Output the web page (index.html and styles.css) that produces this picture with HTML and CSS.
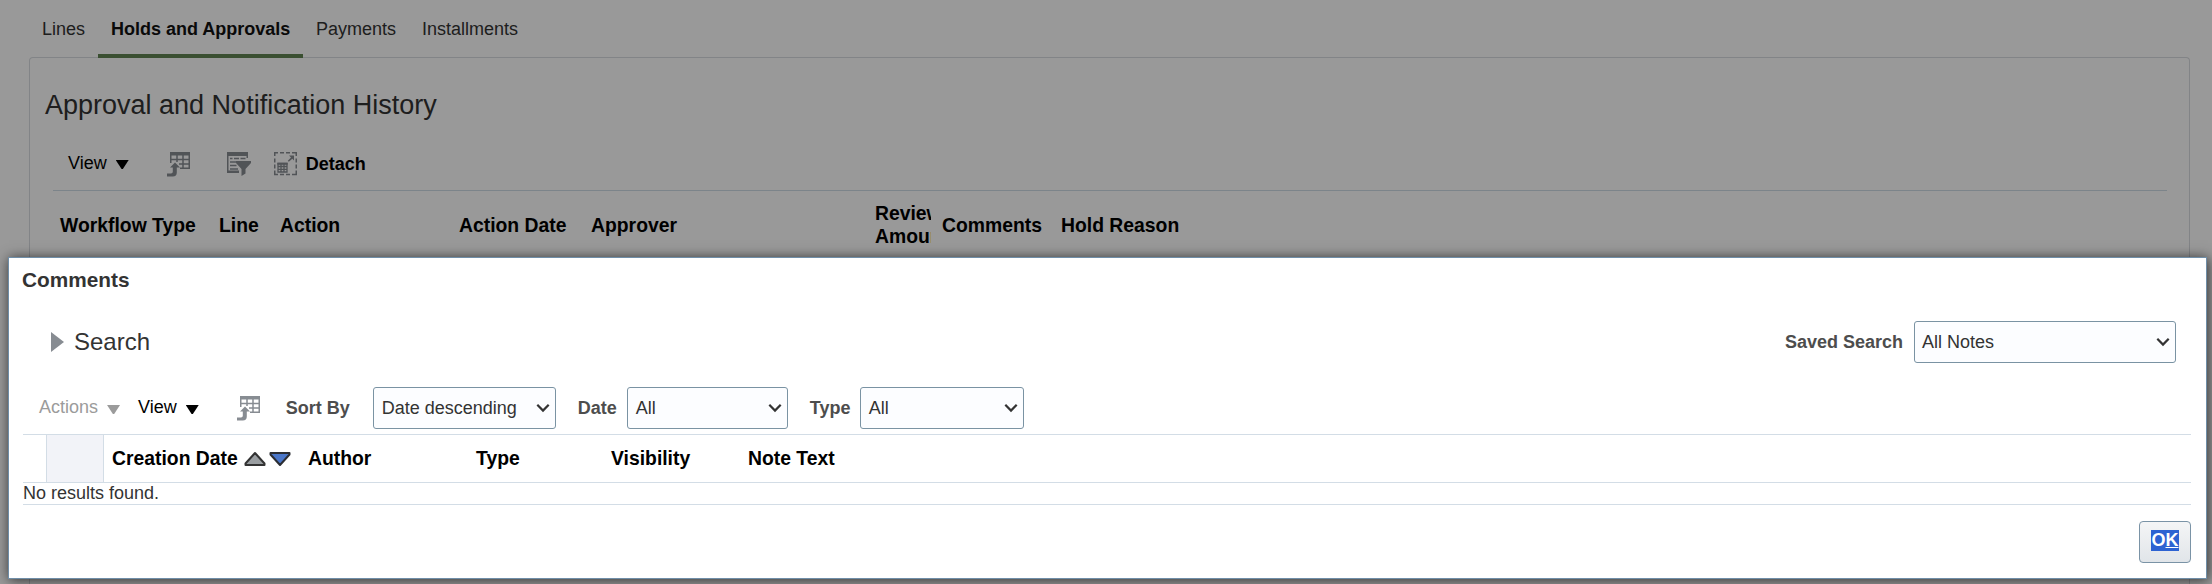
FILE: index.html
```
<!DOCTYPE html>
<html lang="en">
<head>
<meta charset="utf-8">
<title>Approval and Notification History</title>
<link rel="stylesheet" href="styles.css">
</head>
<body>
<svg class="defs" width="0" height="0" aria-hidden="true">
  <symbol id="freeze" viewBox="0 0 24 25">
    <path d="M3 0h20v3.500H3z" fill="#878c92"/>
    <path d="M3.750 3v8M10 3v7M16 3v13.500M22.250 3v13.500M3 7.500h20M12 12h11M13 16.300h10" fill="none" stroke="#878c92" stroke-width="1.500"/>
    <path d="M0 24.500V21.500h4q1.800 0 1.800-1.800V15.500H3L8 10.500l5 5H9.800v5q0 4-4 4z" fill="#878c92"/>
  </symbol>
  <symbol id="filter" viewBox="0 0 24 24">
    <path d="M0 0h21v6h-1.500V4H1.500v15.500H11V21H0z" fill="#878c92"/>
    <path d="M3 6.500h2.500M7 6.500h5M13.500 6.500h5M3 10h6M3 13.500h6.500M3 17h8" fill="none" stroke="#878c92" stroke-width="1.500"/>
    <path d="M0 18.500h12V21H0z M9 9h15v2l-5.500 6v4.500L14.500 24v-7L9 11z" fill="#878c92"/>
  </symbol>
  <symbol id="detach" viewBox="0 0 24 24">
    <path d="M.75 4V.75H4M6 .75h4M12 .75h4M18 .75h4.250V4M22.250 6.500v4M22.250 12.500v4M22.250 18.500v4H18M16 22.500h-4M10 22.500H6M4 22.500H.75V18.500M.75 16.500v-4M.75 10.500v-4" fill="none" stroke="#878c92" stroke-width="1.500"/>
    <path d="M4 11.500h9v8.500H4zM4 14.500h9M4 17.300h9M7 12v8M10 12v8" fill="none" stroke="#878c92" stroke-width="1.300"/>
    <path d="M3.400 10.800h10.200v2H3.400zM15 3.500h5V8.500l-1.700-1.700-3.500 3-1-1 3.200-3.400z" fill="#878c92"/>
  </symbol>
  <symbol id="chevron" viewBox="0 0 14 10">
    <path d="M1.300 1.800L7 7.600l5.700-5.800" fill="none" stroke="#333" stroke-width="2.200"/>
  </symbol>
</svg>

<main class="page">
  <nav class="tabs">
    <a class="tab">Lines</a>
    <a class="tab tab-active">Holds and Approvals</a>
    <a class="tab">Payments</a>
    <a class="tab">Installments</a>
  </nav>
  <section class="panel">
    <h1 class="panel-title">Approval and Notification History</h1>
    <div class="toolbar">
      <span class="menu">View</span><i class="caret"></i>
      <svg class="icon icon-freeze" width="24" height="25"><use href="#freeze"/></svg>
      <svg class="icon icon-filter" width="24" height="24"><use href="#filter"/></svg>
      <svg class="icon icon-detach" width="24" height="24"><use href="#detach"/></svg>
      <span class="detach">Detach</span>
    </div>
    <div class="history-head">
      <span>Workflow Type</span><span>Line</span><span>Action</span><span>Action Date</span><span>Approver</span><span class="clipped">Reviewer<br>Amount</span><span>Comments</span><span>Hold Reason</span>
    </div>
  </section>
</main>
<div class="scrim"></div>

<section class="dialog" role="dialog">
  <h2 class="dialog-title">Comments</h2>
  <div class="search-row">
    <i class="disclosure"></i>
    <span class="search-title">Search</span>
    <span class="label saved-label">Saved Search</span>
    <div class="select saved-select"><span>All Notes</span><svg width="14" height="10"><use href="#chevron"/></svg></div>
  </div>
  <div class="filters">
    <span class="menu menu-disabled">Actions</span><i class="caret caret-disabled"></i>
    <span class="menu menu-view">View</span><i class="caret"></i>
    <svg class="icon icon-freeze-notes" width="24" height="25"><use href="#freeze"/></svg>
    <span class="label label-sort">Sort By</span>
    <div class="select select-sort"><span>Date descending</span><svg width="14" height="10"><use href="#chevron"/></svg></div>
    <span class="label label-date">Date</span>
    <div class="select select-date"><span>All</span><svg width="14" height="10"><use href="#chevron"/></svg></div>
    <span class="label label-type">Type</span>
    <div class="select select-type"><span>All</span><svg width="14" height="10"><use href="#chevron"/></svg></div>
  </div>
  <div class="notes-head">
    <span class="gutter"></span>
    <span class="row-header"></span>
    <span class="col col-created">Creation Date
      <svg width="47" height="16" viewBox="0 0 47 16"><path d="M11 2L20.500 12.500V14h-19v-1.500z" fill="#9a9ea1" stroke="#333" stroke-width="2" stroke-linejoin="round"/><path d="M26.500 2h19v1.500L36 14 26.500 3.500z" fill="#4a76c8" stroke="#2b2d33" stroke-width="2" stroke-linejoin="round"/></svg>
    </span>
    <span class="col">Author</span>
    <span class="col">Type</span>
    <span class="col">Visibility</span>
    <span class="col">Note Text</span>
  </div>
  <div class="empty">No results found.</div>
  <div class="actions"><button class="ok"><span class="ok-text">O<u>K</u></span></button></div>
</section>
</body>
</html>
```

FILE: styles.css
```
* { box-sizing: border-box; }
body {
  margin: 0;
  height: 584px;
  overflow: hidden;
  position: relative;
  background: #fff;
  color: #333;
  font: 18px/22px "Liberation Sans", Arial, sans-serif;
}
.defs { display: block; position: absolute; }
h1, h2 { margin: 0; font-weight: normal; }

.page { isolation: isolate; height: 584px; padding: 0 22px 0 29px; display: flex; flex-direction: column; }
.tabs { z-index: 1; display: flex; height: 58px; margin-bottom: -1px; }
.tab { padding: 18px 13px 0; white-space: nowrap; }
.tab:first-child { width: 69px; }
.tab-active { width: 205px; border-bottom: 4px solid #618452; color: #111; font-weight: bold; }
.tab-active + .tab { width: 106px; }
.panel { flex: 1; border: 1px solid #d9dce1; border-bottom: 0; border-radius: 4px 4px 0 0; }
.panel-title { padding: 30px 0 0 15px; font-size: 27px; line-height: 34px; }
.toolbar {
  display: flex;
  align-items: flex-start;
  height: 69px;
  margin: 0 22px 0 23px;
  padding: 30px 0 0 15px;
  border-bottom: 1px solid #cfdde6;
}
.menu { color: #000; line-height: 22px; }
.caret {
  width: 13px;
  height: 9px;
  margin: 8px 0 0 9px;
  background: #000;
  clip-path: polygon(0 0, 100% 0, 55% 100%, 45% 100%);
}
.icon { display: block; flex: none; }
.icon-freeze { margin: 0 0 0 38px; }
.icon-filter { margin-left: 36px; }
.icon-detach { margin-left: 23px; }
.detach { margin: 1px 0 0 8px; color: #000; font-weight: bold; }
.history-head {
  display: grid;
  grid-template-columns: 159px 61px 179px 132px 284px 67px 119px auto;
  align-items: center;
  height: 68px;
  padding-left: 30px;
  color: #000;
  font-size: 19.350px;
  font-weight: bold;
  line-height: 23px;
}
.clipped { width: 56px; overflow: hidden; }
.scrim { position: absolute; inset: 0; background: rgba(0, 0, 0, .4); }

.dialog {
  position: absolute;
  left: 8px;
  top: 257px;
  width: 2199px;
  height: 322px;
  padding: 0 15px 0 14px;
  border: 1px solid #6f8ea8;
  background: #fff;
  box-shadow: 1px 1px 12px rgba(0, 0, 0, .7);
  display: flex;
  flex-direction: column;
}
.dialog-title { height: 63px; padding-top: 10px; margin-left: -1px; font-size: 20.800px; line-height: 24px; font-weight: bold; }
.search-row { display: flex; align-items: center; height: 42px; padding: 0 15px 0 28px; }
.disclosure { width: 13px; height: 20px; background: #878c92; clip-path: polygon(0 0, 100% 50%, 0 100%); }
.search-title { margin-left: 10px; font-size: 24px; line-height: 28px; }
.label { color: #4d4d4d; font-weight: bold; }
.saved-label { margin-left: auto; margin-right: 11px; }
.select {
  display: flex;
  align-items: center;
  justify-content: space-between;
  height: 42px;
  padding: 0 5px 0 8px;
  border: 1px solid #7a93a3;
  border-radius: 3px;
  background: #fcfdff;
  white-space: nowrap;
}
.saved-select { width: 262px; padding-left: 7px; }
.filters { display: flex; align-items: center; height: 71px; padding: 24px 0 5px 16px; }
.menu-disabled { color: #9b9b9b; }
.filters .caret { margin-top: 3px; }
.filters .caret-disabled { background: #9b9b9b; }
.menu-view { margin-left: 18px; }
.filters .menu { margin-top: -2px; }
.icon-freeze-notes { margin-left: 38px; }
.label-sort { margin-left: 25px; width: 87px; }
.select-sort { width: 183px; }
.label-date { margin-left: 22px; width: 49px; }
.select-date { width: 161px; }
.label-type { margin-left: 22px; width: 50px; }
.select-type { width: 164px; }
.notes-head {
  display: grid;
  grid-template-columns: 23px 58px 197px 168px 135px 137px auto;
  height: 49px;
  border-top: 1px solid #d3dde6;
  border-bottom: 1px solid #d3dde6;
  color: #000;
  font-size: 19.350px;
  font-weight: bold;
}
.row-header { border: solid #d3dde6; border-width: 0 1px; background: #f2f3f8; }
.col { display: flex; align-items: center; gap: 6px; padding: 0 0 2px 7px; white-space: nowrap; }
.col-created { padding-left: 8px; }
.col-created svg { margin-top: 3px; }
.empty { height: 22px; border-bottom: 1px solid #d3dde6; line-height: 21px; }
.actions { display: flex; justify-content: flex-end; padding-top: 16px; }
.ok {
  width: 52px;
  height: 42px;
  padding: 0 0 3px;
  border: 1px solid #7a93a6;
  border-radius: 4px;
  background: linear-gradient(#f4f5f6, #e1e5e9);
  font: bold 18px/21px "Liberation Sans", Arial, sans-serif;
}
.ok-text { display: inline-block; background: #2d63d2; color: #fff; }
```
